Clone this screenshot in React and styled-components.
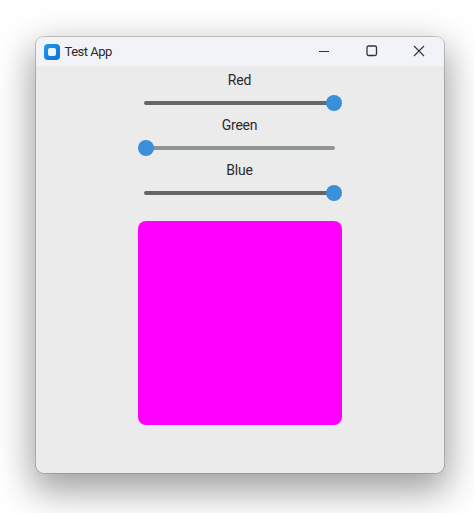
import React from 'react';
import styled, { createGlobalStyle } from 'styled-components';

const GlobalStyle = createGlobalStyle`
  html, body {
    margin: 0;
    background: #fff;
  }
`;

const Desktop = styled.div`
  width: 474px;
  height: 513px;
  box-sizing: border-box;
  padding: 37px 30px 0 36px;
  overflow: hidden;
`;

const Window = styled.div`
  width: 408px;
  height: 436px;
  display: flex;
  flex-direction: column;
  background: #ebebeb;
  border-radius: 8px;
  overflow: hidden;
  box-shadow: 0 0 0 1px rgba(120, 120, 120, 0.4), 0 14px 36px 4px rgba(0, 0, 0, 0.38);
`;

const TitleBar = styled.div`
  height: 29px;
  flex: none;
  display: flex;
  align-items: center;
  padding: 0 1px 0 8px;
  background: #f2f3f9;
`;

const AppIcon = styled.div`
  width: 16px;
  height: 16px;
  flex: none;
  display: flex;
  align-items: center;
  justify-content: center;
  box-sizing: border-box;
  border-radius: 4px;
  background: linear-gradient(135deg, #1a9cf0, #0f6fd0);

  &::after {
    content: '';
    width: 8px;
    height: 8px;
    border-radius: 2px;
    background: #eef6fd;
  }
`;

const Title = styled.span`
  margin-left: 4.5px;
  flex: 1;
  font: 13px Roboto, sans-serif;
  letter-spacing: -0.5px;
  color: #2a2a2a;
`;

const WindowButton = styled.div`
  width: 47.5px;
  height: 29px;
  display: flex;
  align-items: center;
  justify-content: center;
  margin-top: -2px;
  color: #333;
`;

const Content = styled.div`
  flex: 1;
  display: flex;
  flex-direction: column;
  align-items: center;
  padding-top: 3px;
  padding-right: 1px;
`;

const SliderRow = styled.div`
  width: 100%;
  height: 45px;
  display: flex;
  flex-direction: column;
  align-items: center;
`;

const SliderLabel = styled.div`
  height: 22px;
  font: 14px/22px Roboto, sans-serif;
  letter-spacing: -0.2px;
  color: #2b2b2b;
`;

const SliderTrack = styled.div`
  position: relative;
  width: 191px;
  height: 4px;
  margin-top: 10px;
  border-radius: 2px;
  background: ${props => (props.$value > 0 ? '#666666' : '#8f9497')};
`;

const SliderThumb = styled.div`
  position: absolute;
  top: -6px;
  width: 16px;
  height: 16px;
  margin-left: -8px;
  border-radius: 50%;
  background: #3a8fd9;
`;

const Swatch = styled.div`
  width: 204px;
  height: 204px;
  margin-top: 17px;
  margin-left: 1px;
  border-radius: 8px;
  background: rgb(${props => props.$r}, ${props => props.$g}, ${props => props.$b});
`;

const channels = [
  { name: 'Red', value: 255 },
  { name: 'Green', value: 0 },
  { name: 'Blue', value: 255 }
];

export default function App() {
  return (
    <Desktop>
      <GlobalStyle />
      <Window>
        <TitleBar>
          <AppIcon />
          <Title>Test App</Title>
          <WindowButton>
            <svg width="12" height="12" viewBox="0 0 12 12" fill="none" stroke="currentColor" strokeWidth="1">
              <path d="M1 6.5h10" />
            </svg>
          </WindowButton>
          <WindowButton>
            <svg width="12" height="12" viewBox="0 0 12 12" fill="none" stroke="currentColor" strokeWidth="1.3">
              <rect x="1" y="1" width="9.5" height="9.5" rx="1.5" />
            </svg>
          </WindowButton>
          <WindowButton>
            <svg width="12" height="12" viewBox="0 0 12 12" fill="none" stroke="currentColor" strokeWidth="1.1">
              <path d="M1 1l10 10M11 1L1 11" />
            </svg>
          </WindowButton>
        </TitleBar>
        <Content>
          {channels.map(channel => (
            <SliderRow key={ channel.name }>
              <SliderLabel>{ channel.name }</SliderLabel>
              <SliderTrack $value={ channel.value }>
                <SliderThumb style={ { left: `${1.5 + (channel.value / 255) * 188}px` } } />
              </SliderTrack>
            </SliderRow>
          ))}
          <Swatch $r={ 255 } $g={ 0 } $b={ 255 } />
        </Content>
      </Window>
    </Desktop>
  );
}
